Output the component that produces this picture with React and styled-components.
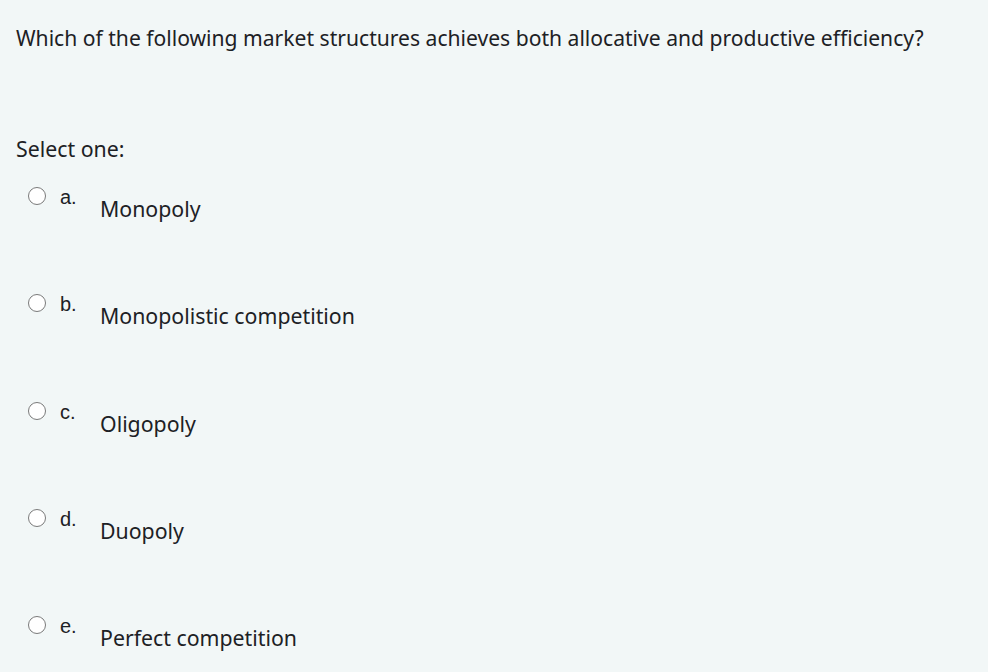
import React from 'react';
import styled, { createGlobalStyle } from 'styled-components';

const GlobalStyle = createGlobalStyle`
  html, body {
    margin: 0;
    padding: 0;
    background: #f2f7f7;
  }
  body {
    font-family: "Noto Sans", "Open Sans", sans-serif;
    color: #1d2125;
  }
`;

const options = [
  { letter: 'a.', text: 'Monopoly' },
  { letter: 'b.', text: 'Monopolistic competition' },
  { letter: 'c.', text: 'Oligopoly' },
  { letter: 'd.', text: 'Duopoly' },
  { letter: 'e.', text: 'Perfect competition' },
];

const App = () => {
  return (
    <>
      <GlobalStyle />
      <Page>
        <Question>
          Which of the following market structures achieves both allocative and productive efficiency?
        </Question>
        <Prompt>Select one:</Prompt>
        <OptionList>
          {options.map((o) => (
            <Option key={o.letter}>
              <Radio type="radio" name="answer" />
              <Letter>{o.letter}</Letter>
              <AnswerText>{o.text}</AnswerText>
            </Option>
          ))}
        </OptionList>
      </Page>
    </>
  );
};

export default App;

const Page = styled.div`
  width: 988px;
  height: 672px;
  box-sizing: border-box;
  padding: 23px 16px 0 16px;
  overflow: hidden;
`;

const Question = styled.div`
  font-size: 21.1px;
  line-height: 30px;
  white-space: nowrap;
`;

const Prompt = styled.div`
  margin-top: 81px;
  font-size: 21.3px;
  line-height: 30px;
`;

const OptionList = styled.div`
  display: flex;
  flex-direction: column;
  margin-top: 21px;
`;

const Option = styled.label`
  display: flex;
  align-items: flex-start;
  height: 107.3px;
`;

const Radio = styled.input`
  appearance: none;
  width: 18px;
  height: 18px;
  margin: 2px 0 0 12px;
  border: 1.6px solid #7a7a7a;
  border-radius: 50%;
  background: #fff;
  box-sizing: border-box;
  flex-shrink: 0;
`;

const Letter = styled.span`
  width: 54px;
  padding: 2px 0 0 14px;
  box-sizing: border-box;
  font-family: "Liberation Sans", Arial, sans-serif;
  font-size: 20px;
  line-height: 20px;
`;

const AnswerText = styled.span`
  margin-top: 12px;
  font-size: 21.3px;
  line-height: 24px;
`;
